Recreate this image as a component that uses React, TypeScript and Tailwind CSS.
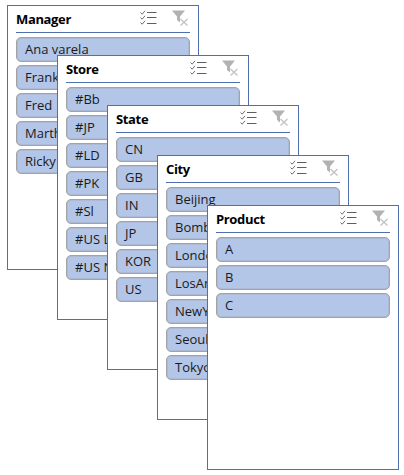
const panels = [
  { title: "Manager", items: ["Ana varela", "Frank", "Fred", "Martha", "Ricky"], pos: "left-[7px] top-[5px]" },
  { title: "Store", items: ["#Bb", "#JP", "#LD", "#PK", "#Sl", "#US LA", "#US NY"], pos: "left-[57px] top-[55px]" },
  { title: "State", items: ["CN", "GB", "IN", "JP", "KOR", "US"], pos: "left-[107px] top-[105px]" },
  { title: "City", items: ["Beijing", "Bombay", "London", "LosAngeles", "NewYork", "Seoul", "Tokyo"], pos: "left-[157px] top-[155px]" },
  { title: "Product", items: ["A", "B", "C"], pos: "left-[207px] top-[205px]" },
];

function MultiIcon() {
  return (
    <svg width="17" height="16" viewBox="0 0 17 16" fill="none" className="block">
      <path d="M0.5 2.5 L2.2 4.2 L5 0.8 M0.5 7.5 L2.2 9.2 L5 5.8 M0.5 12.5 L2.2 14.2 L5 10.8" stroke="#6f6f6f" strokeWidth="1" />
      <path d="M7 2.5 H16.5 M7 7.5 H16.5 M7 13.5 H16.5" stroke="#5f5f5f" strokeWidth="1" />
    </svg>
  );
}

function ClearIcon() {
  return (
    <svg width="16" height="17" viewBox="0 0 16 17" fill="none" className="block">
      <path d="M0 0.5 H13 L8 6.5 V12.5 L5 10 V6.5 Z" fill="#b2b2b2" />
      <path d="M8.5 9 L15.5 15.5 M15.5 9 L8.5 15.5" stroke="#c4c4c4" strokeWidth="1.4" />
    </svg>
  );
}

export default function App() {
  return (
    <div className="relative w-[404px] h-[475px] bg-white overflow-hidden font-['Open_Sans','Noto_Sans',sans-serif]">
      {panels.map((p) => (
        <div
          key={p.title}
          className={`absolute ${p.pos} w-[192px] h-[265px] bg-white border border-[#4f6fae] px-2 overflow-hidden`}
        >
          <div className="h-[27px] flex items-center justify-between border-b border-[#4f6fae] pb-[1px]">
            <span className="text-[13px] font-bold text-black leading-none tracking-[-0.35px] pt-[2px]">{p.title}</span>
            <div className="flex items-start gap-[15px] pr-[2px]">
              <MultiIcon />
              <ClearIcon />
            </div>
          </div>
          <div className="flex flex-col gap-[3px] mt-[4px]">
            {p.items.map((it) => (
              <div
                key={it}
                className="h-[25px] rounded-[5px] bg-[#b4c6e7] border border-[#a3a3a3] shadow-[inset_0_0_0_1px_#acbad6] pl-2 pr-1 flex items-center text-[13px] leading-none text-[#1a1a1a] whitespace-nowrap overflow-hidden"
              >
                {it}
              </div>
            ))}
          </div>
        </div>
      ))}
    </div>
  );
}
